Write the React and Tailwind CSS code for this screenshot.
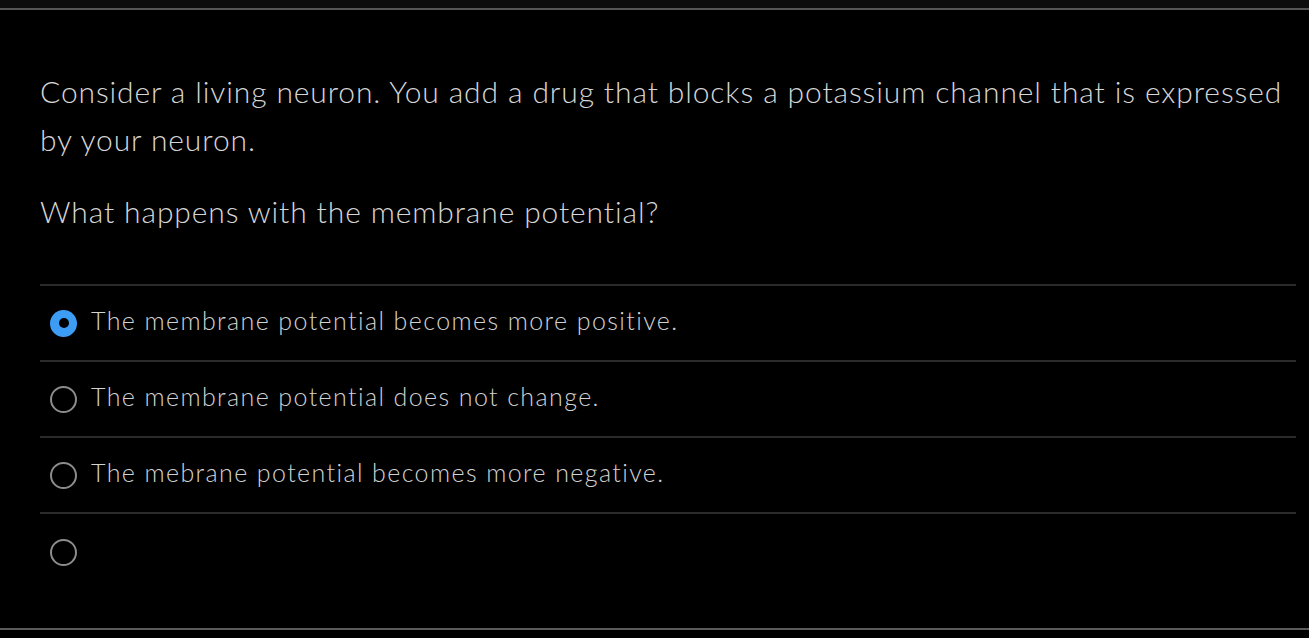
import { useState } from 'react'

const options = [
  'The membrane potential becomes more positive.',
  'The membrane potential does not change.',
  'The mebrane potential becomes more negative.',
  '',
]

function Radio({ checked }) {
  if (checked) {
    return (
      <span className="w-[27px] h-[27px] rounded-full bg-[#3d9df5] flex items-center justify-center shrink-0">
        <span className="w-[10px] h-[10px] rounded-full bg-black" />
      </span>
    )
  }
  return <span className="w-[27px] h-[27px] rounded-full border-[2.5px] border-[#8c8c8c] shrink-0" />
}

export default function App() {
  const [selected, setSelected] = useState(0)

  return (
    <div className="w-[1309px] h-[638px] bg-black overflow-hidden flex flex-col" style={{ fontFamily: 'Lato, "Open Sans", sans-serif' }}>
      <div className="h-[8px] bg-[#0d0d0d]" />
      <div className="h-[2px] bg-[#565656]" />
      <div className="flex-1 pl-[40px] pr-[13px] pt-[57px]">
        <p className="text-[30px] leading-[48px] font-light text-[#d6d6d6] tracking-[0.88px]">
          Consider a living neuron. You add a drug that blocks a potassium channel that is expressed by your neuron.
        </p>
        <p className="mt-[24px] text-[30px] leading-[48px] font-light text-[#d6d6d6] tracking-[0.88px]">
          What happens with the membrane potential?
        </p>
        <div className="mt-[49px] border-t-2 border-[#2b2b2b]">
          {options.map((opt, i) => (
            <div
              key={i}
              onClick={() => setSelected(i)}
              className={`h-[76px] flex items-center gap-[14px] pl-[10px] cursor-pointer ${i < options.length - 1 ? 'border-b-2 border-[#2b2b2b]' : ''}`}
            >
              <Radio checked={selected === i} />
              <span className="text-[25px] font-light text-[#d2d2d2] tracking-[1.4px] -mt-[4px]">{opt}</span>
            </div>
          ))}
        </div>
      </div>
      <div className="h-[2px] bg-[#5a5a5a] mb-[8px]" />
    </div>
  )
}
